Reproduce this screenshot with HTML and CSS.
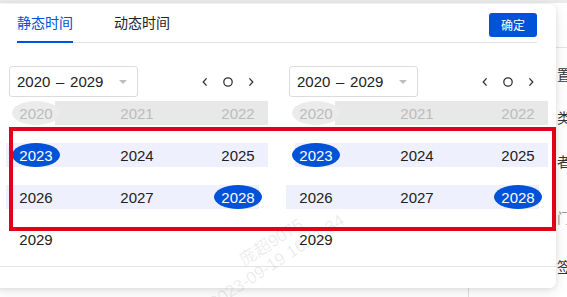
FILE: index.html
```html
<!DOCTYPE html>
<html lang="zh">
<head>
<meta charset="utf-8">
<title>年份选择</title>
<link rel="stylesheet" href="styles.css">
</head>
<body>
<div class="page">
  <div class="topbar"></div>
  <div class="bg-head"></div>
  <div class="bg-labels">
    <div class="bg-label l1">置</div>
    <div class="bg-label l2">类</div>
    <div class="bg-label l3">者</div>
    <div class="bg-label l4 muted">门</div>
    <div class="bg-label l5">签</div>
  </div>
  <div class="bg-foot"></div>
</div>

<div class="popup">
  <div class="header">
    <div class="tab active">静态时间</div>
    <div class="tab">动态时间</div>
    <button class="confirm">确定</button>
  </div>
  <div class="panels">
    <div class="panel">
      <div class="panel-head">
        <div class="select"><span class="select-text">2020 – 2029</span><svg class="caret" width="8" height="4" viewBox="0 0 8 4"><path d="M0 0 H8 L4 4 Z" fill="#bdbdbd"/></svg></div>
        <div class="nav">
          <svg class="nav-icon" width="16" height="16" viewBox="0 0 16 16"><path d="M9.6 4.4 L6.2 8 L9.6 11.6" fill="none" stroke="#333" stroke-width="1.3"/></svg>
          <svg class="nav-icon" width="16" height="16" viewBox="0 0 16 16"><circle cx="8" cy="8" r="4.2" fill="none" stroke="#333" stroke-width="1.3"/></svg>
          <svg class="nav-icon" width="16" height="16" viewBox="0 0 16 16"><path d="M6.4 4.4 L9.8 8 L6.4 11.6" fill="none" stroke="#333" stroke-width="1.3"/></svg>
        </div>
      </div>
      <div class="grid">
        <div class="row row-disabled"><span class="cell disabled start">2020</span><span class="cell disabled">2021</span><span class="cell disabled">2022</span></div>
        <div class="row row-range"><span class="cell selected">2023</span><span class="cell">2024</span><span class="cell">2025</span></div>
        <div class="row row-range-end"><span class="cell">2026</span><span class="cell">2027</span><span class="cell selected">2028</span></div>
        <div class="row"><span class="cell">2029</span><span class="cell"></span><span class="cell"></span></div>
      </div>
    </div>
    <div class="panel">
      <div class="panel-head">
        <div class="select"><span class="select-text">2020 – 2029</span><svg class="caret" width="8" height="4" viewBox="0 0 8 4"><path d="M0 0 H8 L4 4 Z" fill="#bdbdbd"/></svg></div>
        <div class="nav">
          <svg class="nav-icon" width="16" height="16" viewBox="0 0 16 16"><path d="M9.6 4.4 L6.2 8 L9.6 11.6" fill="none" stroke="#333" stroke-width="1.3"/></svg>
          <svg class="nav-icon" width="16" height="16" viewBox="0 0 16 16"><circle cx="8" cy="8" r="4.2" fill="none" stroke="#333" stroke-width="1.3"/></svg>
          <svg class="nav-icon" width="16" height="16" viewBox="0 0 16 16"><path d="M6.4 4.4 L9.8 8 L6.4 11.6" fill="none" stroke="#333" stroke-width="1.3"/></svg>
        </div>
      </div>
      <div class="grid">
        <div class="row row-disabled"><span class="cell disabled start">2020</span><span class="cell disabled">2021</span><span class="cell disabled">2022</span></div>
        <div class="row row-range-right"><span class="cell selected">2023</span><span class="cell">2024</span><span class="cell">2025</span></div>
        <div class="row row-range-end"><span class="cell">2026</span><span class="cell">2027</span><span class="cell selected">2028</span></div>
        <div class="row"><span class="cell">2029</span><span class="cell"></span><span class="cell"></span></div>
      </div>
    </div>
  </div>
  <div class="footer"></div>
</div>

<div class="watermark">
  <div class="wm-line">庞超9075</div>
  <div class="wm-line wm-second">2023-09-19 16:11:34</div>
</div>

<div class="annotation"></div>
</body>
</html>
```

FILE: styles.css
```css
* { box-sizing: border-box; }

html, body {
  margin: 0;
  padding: 0;
  width: 567px;
  height: 297px;
  overflow: hidden;
  background: #ffffff;
  font-family: "Liberation Sans", "Noto Sans CJK SC", sans-serif;
}

body { position: relative; }

/* page behind the popup */
.page {
  height: 297px;
  display: flex;
  flex-direction: column;
}
.topbar {
  height: 3px;
  background: #ebebeb;
}
.bg-head {
  height: 45px;
  border-bottom: 1px solid #e4e4e4;
}
.bg-labels {
  flex: 1;
  display: flex;
  flex-direction: column;
  padding-left: 557px;
  font-family: "Noto Sans CJK SC", sans-serif;
  font-size: 14px;
  line-height: 14px;
  color: #333;
}
.bg-label { height: 14px; }
.l1 { margin-top: 19px; }
.l2 { margin-top: 29px; }
.l3 { margin-top: 30px; }
.l4 { margin-top: 42px; }
.l5 { margin-top: 35px; }
.muted { color: #999; }
.bg-foot {
  height: 10px;
  margin-left: 468px;
  border-left: 1px solid #dddddd;
}

/* popup */
.popup {
  position: absolute;
  left: -6px;
  top: 4px;
  width: 562px;
  height: 284px;
  padding-left: 6px;
  background: #ffffff;
  border-radius: 6px;
  box-shadow: 0 3px 14px rgba(0, 0, 0, 0.10), 0 1px 4px rgba(0, 0, 0, 0.08);
  display: flex;
  flex-direction: column;
}

.header {
  height: 39px;
  margin: 0 19px 0 17px;
  border-bottom: 1px solid #e2e2e2;
  display: flex;
  align-items: flex-start;
  gap: 41px;
}
.tab {
  font-family: "Noto Sans CJK SC", sans-serif;
  font-size: 14px;
  line-height: 37px;
  height: 39px;
  color: #222;
  border-bottom: 2px solid transparent;
}
.tab.active {
  color: #0052d9;
  border-bottom-color: #0052d9;
}
.confirm {
  margin-left: auto;
  margin-top: 9px;
  width: 48px;
  height: 24px;
  padding: 0;
  border: none;
  border-radius: 3px;
  background: #0052d9;
  color: #ffffff;
  font-family: "Noto Sans CJK SC", sans-serif;
  font-size: 12px;
  line-height: 24px;
}

.panels {
  display: flex;
  padding-top: 23px;
}
.panel {
  width: 280px;
  flex: none;
}
.panel-head {
  display: flex;
  align-items: center;
  padding-left: 9px;
  height: 31px;
}
.select {
  width: 129px;
  height: 31px;
  border: 1px solid #dcdcdc;
  border-radius: 3px;
  display: flex;
  align-items: center;
  padding-left: 7px;
  padding-right: 10px;
  font-size: 15px;
  color: #222;
}
.select-text { word-spacing: 1.5px; }
.caret { margin-left: auto; }
.nav {
  display: flex;
  align-items: center;
  gap: 7px;
  margin-left: 59px;
}
.nav-icon { display: block; }

.grid {
  margin-top: 4px;
  display: flex;
  flex-direction: column;
  gap: 18px;
}
.row {
  margin-left: 6px;
  width: 262px;
  height: 24px;
  padding: 0 6px;
  display: flex;
  justify-content: space-between;
  align-items: center;
}
.row-disabled {
  background: linear-gradient(to right, transparent 49px, #e8e8e8 49px);
}
.row-range {
  background: #eef0fd;
}
.row-range-right {
  background: linear-gradient(to right, transparent 9px, #eef0fd 9px);
}
.row-range-end {
  background: linear-gradient(to right, #eef0fd 253px, transparent 253px);
}
.cell {
  width: 48px;
  height: 24px;
  display: flex;
  align-items: center;
  justify-content: center;
  font-size: 15px;
  color: #222;
}
.cell.disabled { color: #bbbbbb; }
.cell.start {
  background: #ebebeb;
  border-radius: 50%;
}
.cell.selected {
  background: #0052d9;
  color: #ffffff;
  border-radius: 50%;
}

.footer {
  margin-top: 15px;
  margin-left: -6px;
  border-top: 1px solid #e4e4e4;
  flex: 1;
}

/* watermark overlay */
.watermark {
  position: absolute;
  left: 236px;
  top: 254px;
  transform-origin: 0 0;
  transform: rotate(-33deg);
  font-family: "Liberation Sans", "Noto Sans CJK SC", sans-serif;
  font-size: 17px;
  line-height: 19px;
  color: rgba(0, 0, 0, 0.09);
  white-space: nowrap;
  pointer-events: none;
}
.wm-second { margin-left: -48px; }

/* red annotation box */
.annotation {
  position: absolute;
  left: 9px;
  top: 127px;
  width: 547px;
  height: 104px;
  border: 4px solid #e3001b;
  pointer-events: none;
}
```
